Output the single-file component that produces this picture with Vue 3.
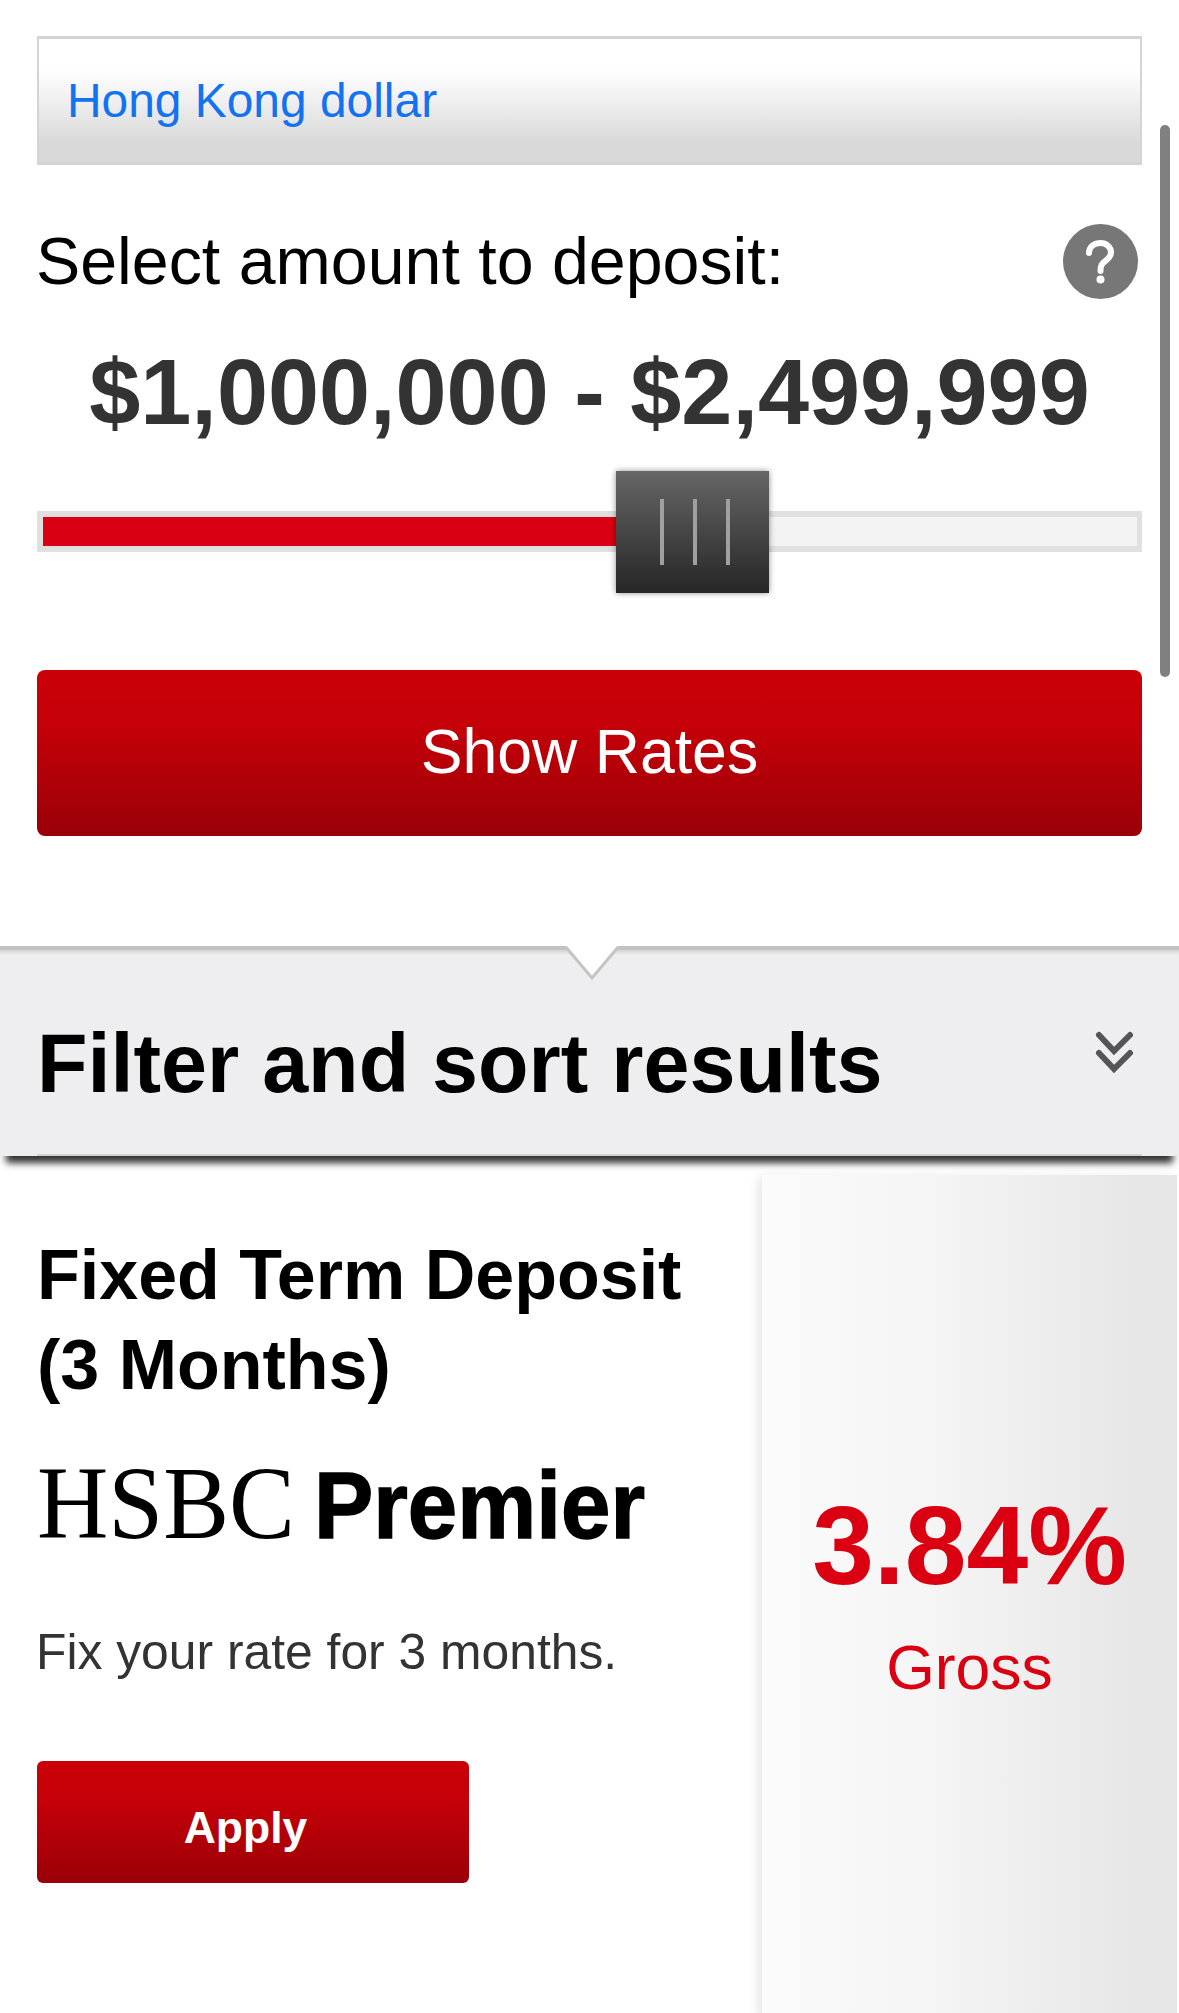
<template>
  <div class="page">
    <div class="top">
      <div class="select"><span class="select-text">Hong Kong dollar</span></div>
      <div class="amount-row">
        <span class="amount-label">Select amount to deposit:</span>
        <svg class="help" width="75" height="75" viewBox="0 0 75 75">
          <circle cx="37.5" cy="37.5" r="37.5" fill="#777" />
          <path d="M26 29 C26 22 32 19 37.5 19 C43.5 19 48 23 48 28.5 C48 35 41 36.5 38.5 41 C37.5 43 37.5 45 37.5 47" fill="none" stroke="#fff" stroke-width="6" stroke-linecap="round" />
          <circle cx="37.5" cy="55.5" r="4" fill="#fff" />
        </svg>
      </div>
      <div class="range">$1,000,000 - $2,499,999</div>
      <div class="slider">
        <div class="fill"></div>
        <div class="thumb"><i></i><i></i><i></i></div>
      </div>
      <button class="show">Show Rates</button>
    </div>
    <div class="filter">
      <svg class="notch" width="64" height="36" viewBox="0 0 64 36">
        <path d="M3 0 L30 32 L57 0" fill="#fff" stroke="#c4c4c4" stroke-width="3" />
      </svg>
      <h2>Filter and sort results</h2>
      <svg class="chev" width="40" height="44" viewBox="0 0 40 44">
        <path d="M4 5 L19 21 L35 5" fill="none" stroke="#555" stroke-width="6" stroke-linecap="round" />
        <path d="M4 23 L19 39 L35 23" fill="none" stroke="#555" stroke-width="6" stroke-linecap="round" />
      </svg>
    </div>
    <div class="result">
      <div class="info">
        <h3>Fixed Term Deposit<br />(3 Months)</h3>
        <svg class="logo" width="620" height="110" viewBox="0 0 620 110">
          <text class="hsbc" x="0" y="89" textLength="258" lengthAdjust="spacingAndGlyphs">HSBC</text>
          <text class="premier" x="277" y="89" textLength="331" lengthAdjust="spacingAndGlyphs">Premier</text>
        </svg>
        <p>Fix your rate for 3 months.</p>
        <button class="apply">Apply</button>
      </div>
      <div class="rate">
        <div class="pct">3.84%</div>
        <div class="gross">Gross</div>
      </div>
    </div>
    <div class="scrollbar"></div>
  </div>
</template>

<script setup>
</script>

<style>
html, body { margin: 0; background: #fff; }
</style>

<style scoped>
.page {
  position: relative;
  width: 1179px;
  height: 2013px;
  overflow: hidden;
  background: #fff;
  font-family: "Liberation Sans", Arial, sans-serif;
  color: #000;
}
.top { padding: 36px 37px 0; }
.select {
  height: 129px;
  box-sizing: border-box;
  border: 3px solid #d4d4d4;
  border-width: 3px 2px;
  background: linear-gradient(#fff 0%, #fff 25%, #d9d9d9 85%, #d9d9d9 100%);
  padding: 34px 0 0 28px;
  line-height: 56px;
  font-size: 47.9px;
  color: #1272ef;
}
.amount-row {
  display: flex;
  justify-content: space-between;
  align-items: center;
  margin-top: 59px;
  height: 75px;
  padding-right: 4px;
}
.amount-label { font-size: 66.3px; line-height: 75px; margin-left: -1px; }
.help { display: block; flex: none; }
.range {
  margin-top: 40px;
  font-size: 91.8px;
  font-weight: bold;
  line-height: 106px;
  text-align: center;
  color: #333;
}
.slider {
  position: relative;
  margin-top: 66px;
  height: 41px;
  box-sizing: border-box;
  border: 6px solid #e0e0e0;
  border-right-width: 5px;
  background: #f3f3f3;
}
.fill { height: 100%; width: 590px; background: #db0011; }
.thumb {
  position: absolute;
  left: 573px;
  top: -46px;
  width: 153px;
  height: 122px;
  padding-left: 5px;
  box-sizing: border-box;
  background: linear-gradient(#666, #262626);
  box-shadow: 0 0 6px rgba(0, 0, 0, 0.45);
  display: flex;
  justify-content: center;
  align-items: center;
  gap: 29px;
}
.thumb i { display: block; width: 4px; height: 66px; background: #a0a0a0; }
.show {
  display: block;
  width: 100%;
  height: 166px;
  margin-top: 118px;
  padding: 0 0 5px;
  border: 0;
  border-radius: 8px;
  background: linear-gradient(#cb0008 0%, #c40008 35%, #9a0008 100%);
  color: #fff;
  font-family: inherit;
  font-size: 62.6px;
}
.filter {
  position: relative;
  margin-top: 110px;
  height: 210px;
  box-sizing: border-box;
  background: linear-gradient(#d4d4d4 0, #eeeef0 5px);
  border-top: 4px solid #c2c2c2;
  box-shadow: 0 13px 7px -6px #333;
  display: flex;
  align-items: flex-start;
  justify-content: space-between;
  padding: 66px 44px 0 37px;
}
.filter::after {
  content: "";
  position: absolute;
  left: 37px;
  right: 37px;
  bottom: 0;
  height: 2px;
  background: #d2d2d2;
}
.notch { position: absolute; left: 562px; top: -4px; }
.filter h2 {
  margin: 0;
  font-size: 82.7px;
  line-height: 95px;
  font-weight: bold;
}
.chev { margin-top: 14px; flex: none; }
.result {
  display: flex;
  margin-top: 19px;
  height: 850px;
}
.info { width: 725px; padding-left: 37px; flex: none; }
.info h3 {
  margin: 0;
  padding-top: 55px;
  font-size: 70px;
  line-height: 90px;
  font-weight: bold;
}
.logo { display: block; margin-top: 39px; overflow: visible; }
.hsbc {
  font-family: "Liberation Serif", serif;
  font-size: 103px;
}
.premier { font-size: 94px; font-weight: bold; stroke: #000; stroke-width: 1.4px; }
.info p {
  margin: 64px 0 0 -1px;
  font-size: 49.8px;
  line-height: 58px;
  color: #333;
}
.apply {
  display: block;
  width: 432px;
  height: 122px;
  margin-top: 80px;
  padding: 12px 15px 0 0;
  border: 0;
  border-radius: 6px;
  background: linear-gradient(#cb0008 0%, #c40008 35%, #9a0008 100%);
  color: #fff;
  font-family: inherit;
  font-size: 44.5px;
  font-weight: bold;
}
.rate {
  width: 415px;
  height: 100%;
  flex: none;
  background: linear-gradient(90deg, #fbfbfb 0%, #f5f5f5 40%, #e7e7e7 90%);
  box-shadow: -6px 0 10px -2px rgba(0, 0, 0, 0.1);
  display: flex;
  flex-direction: column;
  align-items: center;
  padding-top: 308px;
  box-sizing: border-box;
  color: #db0011;
}
.pct { font-size: 111px; font-weight: bold; line-height: 126px; }
.gross { font-size: 62.5px; line-height: 72px; margin-top: 22px; }
.scrollbar {
  position: absolute;
  left: 1160px;
  top: 125px;
  width: 10px;
  height: 552px;
  border-radius: 5px;
  background: #808080;
}
</style>
